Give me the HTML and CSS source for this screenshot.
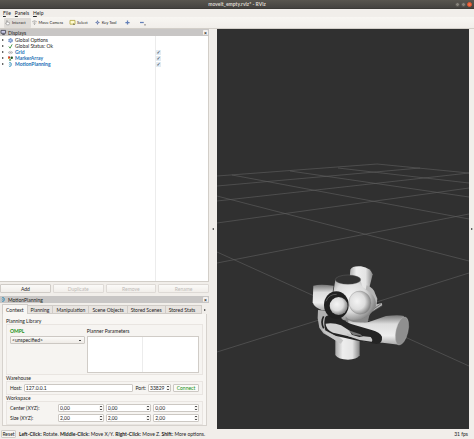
FILE: index.html
```html
<!DOCTYPE html>
<html lang="en">
<head>
    <meta charset="UTF-8">
    <meta name="viewport" content="width=device-width, initial-scale=1.0">
    <title>moveit_empty.rviz* - RViz</title>
    <link rel="stylesheet" href="styles.css">
</head>
<body>
    <!-- Window title bar -->
    <header class="titlebar">
        <h1>moveit_empty.rviz* - RViz</h1>
        <div class="window-buttons">
            <button type="button" aria-label="Minimize"></button>
            <button type="button" aria-label="Maximize"></button>
            <button type="button" class="close" aria-label="Close"></button>
        </div>
    </header>

    <!-- Menu bar -->
    <nav class="menubar">
        <button type="button"><u>F</u>ile</button>
        <button type="button"><u>P</u>anels</button>
        <button type="button"><u>H</u>elp</button>
    </nav>

    <!-- Tools -->
    <div class="toolbar">
        <button type="button" class="tool active">
            <svg class="icon" viewBox="0 0 12 12"><path d="M4 7V1.500q1-1 1.500 0V5l5 1v3l-1 2.500H4L1 7.500q1-1 3 .8" fill="#fff" stroke="#666" stroke-width="1"/></svg>
            Interact
        </button>
        <button type="button" class="tool">
            <svg class="icon" viewBox="0 0 12 12"><path d="M6 3v8M3 8l3 3 3-3M1 4q5-5 10 0M1 4l3 1M11 4L8 5" fill="none" stroke="#777" stroke-width="1"/></svg>
            Move Camera
        </button>
        <button type="button" class="tool spaced">
            <svg class="icon" viewBox="0 0 12 12"><path d="M0 1h12v9H0z" fill="#fffbd0" stroke="#b5a742" stroke-width="2"/><path d="M8 7l4 5H8z" fill="#665"/></svg>
            Select
        </button>
        <button type="button" class="tool spaced">
            <svg class="icon" viewBox="0 0 12 12"><path d="M6 0l2 4 4 2-4 2-2 4-2-4-4-2 4-2z" fill="#6577a5"/><circle cx="6" cy="6" r="2" fill="#aab9dc"/></svg>
            Key Tool
        </button>
        <button type="button" class="tool plus" aria-label="Add tool">
            <svg class="icon" viewBox="0 0 12 12"><path d="M6 1v10M1 6h10" stroke="#6480b8" stroke-width="3"/></svg>
        </button>
        <button type="button" class="tool" aria-label="Remove tool">
            <svg class="icon" viewBox="0 0 12 12"><path d="M0 6h9" stroke="#6480b8" stroke-width="3"/><path d="M10 11h4l-2 3z" fill="#333"/></svg>
        </button>
    </div>

    <main class="workspace">
        <aside class="sidebar">
            <!-- Displays panel -->
            <section class="displays">
                <div class="panel-title">
                    <svg class="icon" viewBox="0 0 12 12"><path d="M0 1h11v7H0z" fill="#c9cbe8" stroke="#445" stroke-width="2"/><path d="M3 11h6" stroke="#334" stroke-width="2"/></svg>
                    <h2>Displays</h2>
                    <button type="button" class="panel-close" aria-label="Close Displays">×</button>
                </div>
                <ul class="tree">
                    <li>
                        <span class="arrow"></span>
                        <svg class="icon" viewBox="0 0 12 12"><circle cx="6" cy="6" r="4" fill="#b9cbea" stroke="#5a7fbe" stroke-width="3" stroke-dasharray="3 1"/></svg>
                        <span>Global Options</span>
                    </li>
                    <li>
                        <span class="arrow"></span>
                        <svg class="icon" viewBox="0 0 12 12"><path d="M2 6l3 4 5-9" fill="none" stroke="#2b8a2b" stroke-width="2"/></svg>
                        <span>Global Status: Ok</span>
                    </li>
                    <li class="display">
                        <span class="arrow"></span>
                        <svg class="icon" viewBox="0 0 12 12"><path d="M0 6l6-3 6 3-6 3zM3 4l6 4M9 4L3 8" fill="none" stroke="#888" stroke-width="1"/></svg>
                        <label for="grid">Grid</label>
                        <input type="checkbox" id="grid" checked>
                    </li>
                    <li class="display">
                        <span class="arrow"></span>
                        <svg class="icon" viewBox="0 0 12 12"><path d="M0 1h5v5H0z" fill="#c33"/><circle cx="9" cy="4" r="3" fill="#252"/><path d="M5 6l3 5H2z" fill="#2a7d2f"/><path d="M0 2l3 5H0z" fill="#dcb620"/></svg>
                        <label for="marker-array">MarkerArray</label>
                        <input type="checkbox" id="marker-array" checked>
                    </li>
                    <li class="display">
                        <span class="arrow"></span>
                        <svg class="icon" viewBox="0 0 12 12"><path d="M3 1q6 0 5 5 0 5-5 5M3 4q3 2 0 4" fill="none" stroke="#2787b5" stroke-width="2"/></svg>
                        <label for="motion-planning">MotionPlanning</label>
                        <input type="checkbox" id="motion-planning" checked>
                    </li>
                </ul>
                <div class="display-buttons">
                    <button type="button">Add</button>
                    <button type="button" disabled>Duplicate</button>
                    <button type="button" disabled>Remove</button>
                    <button type="button" disabled>Rename</button>
                </div>
            </section>

            <!-- MotionPlanning panel -->
            <section class="motion">
                <div class="panel-title">
                    <svg class="icon" viewBox="0 0 12 12"><path d="M3 1q6 0 5 5 0 5-5 5M3 4q3 2 0 4" fill="none" stroke="#2787b5" stroke-width="2"/></svg>
                    <h2>MotionPlanning</h2>
                    <button type="button" class="panel-close" aria-label="Close MotionPlanning">×</button>
                </div>
                <div class="tabs">
                    <button type="button" class="tab current">Context</button>
                    <button type="button" class="tab">Planning</button>
                    <button type="button" class="tab">Manipulation</button>
                    <button type="button" class="tab">Scene Objects</button>
                    <button type="button" class="tab">Stored Scenes</button>
                    <button type="button" class="tab last">Stored Stats</button>
                    <button type="button" class="tab-scroll" aria-label="Scroll tabs"><span class="arrow"></span></button>
                </div>
                <form class="tab-page">
                    <h3>Planning Library</h3>
                    <div class="group library">
                        <div class="planner">
                            <label for="planner" class="ompl">OMPL</label>
                            <select id="planner">
                                <option>&lt;unspecified&gt;</option>
                            </select>
                        </div>
                        <div class="parameters">
                            <span>Planner Parameters</span>
                            <div class="parameter-table"></div>
                        </div>
                    </div>

                    <h3>Warehouse</h3>
                    <div class="group warehouse">
                        <label for="host">Host:</label>
                        <input type="text" id="host" value="127.0.0.1">
                        <label for="port">Port:</label>
                        <span class="spin port"><input type="text" id="port" value="33829"><i></i></span>
                        <button type="button" class="connect">Connect</button>
                    </div>

                    <h3>Workspace</h3>
                    <div class="group volume">
                        <label for="center-x">Center (XYZ):</label>
                        <span class="spin"><input type="text" id="center-x" value="0,00"><i></i></span>
                        <span class="spin"><input type="text" aria-label="Center Y" value="0,00"><i></i></span>
                        <span class="spin"><input type="text" aria-label="Center Z" value="0,00"><i></i></span>
                        <label for="size-x">Size (XYZ):</label>
                        <span class="spin"><input type="text" id="size-x" value="2,00"><i></i></span>
                        <span class="spin"><input type="text" aria-label="Size Y" value="2,00"><i></i></span>
                        <span class="spin"><input type="text" aria-label="Size Z" value="2,00"><i></i></span>
                    </div>
                </form>
            </section>
        </aside>

        <div class="splitter"><span class="arrow back"></span></div>

        <!-- 3D view -->
        <div class="view">
            <svg viewBox="217 29 252 400" preserveAspectRatio="xMidYMid slice">
                <defs>
                    <linearGradient id="tube">
                        <stop offset="0" stop-color="#aaa"/>
                        <stop offset=".3" stop-color="#eee"/>
                        <stop offset=".7" stop-color="#e4e4e4"/>
                        <stop offset="1" stop-color="#858585"/>
                    </linearGradient>
                    <linearGradient id="arm" x1="0" y1="0" x2="0" y2="1">
                        <stop offset="0" stop-color="#777"/>
                        <stop offset=".3" stop-color="#ddd"/>
                        <stop offset=".7" stop-color="#eee"/>
                        <stop offset="1" stop-color="#aaa"/>
                    </linearGradient>
                    <radialGradient id="ball" cx=".4" cy=".4" r=".6">
                        <stop offset="0" stop-color="#f4f4f4"/>
                        <stop offset=".6" stop-color="#ddd"/>
                        <stop offset="1" stop-color="#888"/>
                    </radialGradient>
                </defs>
                <!-- ground grid -->
                <path class="ground" d="M377 164L469 173M338 168L469 183M290 171L469 197M232 175L469 219M217 196L469 261M217 252L469 366
                    M217 176L377 164M217 186L420 168M217 201L469 173M217 223L469 188M217 263L469 214M217 352L469 273"/>
                <!-- robot arm -->
                <g transform="translate(300 255) scale(.3333)">
                    <path d="M151 44q5-12 32-10 31 6 35 24l-11 45-31 5-28-25z" fill="url(#tube)"/>
                    <path d="M200 91q22 8 26 26l6 14-2 17 15-4 2 7-35 22-32 5z" fill="#b5b5b5"/>
                    <path d="M208 175l38-22M211 169l32-23" stroke="#555" stroke-width="2"/>
                    <path d="M40 92q20-5 61 0l-12 73-23 1q-24-9-28-24z" fill="url(#arm)"/>
                    <path d="M54 165l25 2 12 25 37 55-6 18-52-30-12-17-5-28z" fill="#b2b2b2"/>
                    <path d="M106 244h73v57q-9 13-35 13-29 0-38-14z" fill="url(#tube)"/>
                    <path d="M106 75q37 14 75 0l7 21 24 18q18 16 16 40l-20 27-37 20-45-6-26-83z" fill="url(#ball)"/>
                    <ellipse cx="144" cy="74" rx="38" ry="14" fill="#333" stroke="#777" stroke-width="1"/>
                    <path d="M137 184q8 17 47 8l25-14-6 24-52 9-14-12z" fill="#888"/>
                    <ellipse cx="180" cy="143" rx="33" ry="35" fill="url(#ball)" stroke="#888" stroke-width="1" transform="rotate(-20 180 143)"/>
                    <path d="M145 195q17 11 62 6l51-18q39-5 54 0l-15 86-49-6-55-2-48-39z" fill="url(#arm)"/>
                    <ellipse cx="306" cy="228" rx="18" ry="43" fill="#8f8f8f" stroke="#bbb" stroke-width="1" transform="rotate(13 306 228)"/>
                    <path d="M74 194q0-13 16-14 20 0 33 10 17 15 43 21l49 14q25 6 31 20 2 21-16 22l-57-10-67-15-30-16q-5-20-2-32z" fill="#242424"/>
                    <path d="M77 206q24-4 46 5l26 16 10 20-60-14q-22-10-22-27z" fill="#d4d4d4"/>
                    <path d="M140 235l38 11 12-2 22 2q8 9 3 14l-36-5-36-12z" fill="#c8c8c8"/>
                    <path d="M145 226l36 12 6 5-28-4z" fill="#777"/>
                    <path d="M66 217l9 11 43 20 12 8-8 10-44-29q-12-9-12-20z" fill="#c6c6c6"/>
                    <path d="M71 184q-10 17 0 36" fill="none" stroke="#222" stroke-width="5"/>
                    <ellipse cx="109" cy="150" rx="37" ry="41" fill="#202020"/>
                    <path d="M78 139q9-22 32-21" fill="none" stroke="#555" stroke-width="3"/>
                    <circle cx="116" cy="153" r="27" fill="url(#ball)"/>
                </g>
            </svg>
        </div>

        <div class="splitter"><span class="arrow"></span></div>
    </main>

    <footer class="statusbar">
        <button type="button">Reset</button>
        <p><b>Left-Click:</b> Rotate. <b>Middle-Click:</b> Move X/Y. <b>Right-Click:</b> Move Z. <b>Shift:</b> More options.</p>
        <span class="fps">31 fps</span>
    </footer>
</body>
</html>
```

FILE: styles.css
```css
* {
    box-sizing: border-box;
}

body, h1, h2, h3, p, ul {
    margin: 0;
    padding: 0;
}

body {
    display: flex;
    flex-direction: column;
    height: 100vh;
    overflow: hidden;
    background-color: #f1eeea;
    color: #222;
    font-family: Lato, "Open Sans", sans-serif;
    font-size: 5px;
    line-height: 6px;
    white-space: nowrap;
}

button, input, select {
    margin: 0;
    padding: 0;
    border: none;
    background: none;
    color: inherit;
    font: inherit;
}

.icon {
    width: 5px;
    height: 5px;
    flex: none;
    overflow: visible;
}

/* Small black triangle used in the tree, tabs and splitters */
.arrow {
    border-left: 2px solid #333;
    border-top: 1px solid transparent;
    border-bottom: 1px solid transparent;
}

.arrow.back {
    transform: rotate(180deg);
}

/* Title bar */
.titlebar {
    display: grid;
    grid-template-columns: 1fr auto 1fr;
    align-items: center;
    height: 9px;
    padding: 0 2px;
    background: linear-gradient(#59564f, #454340);
    border-bottom: 1px solid #3c3b37;
    color: #dfdbd2;
}

.titlebar h1 {
    grid-column: 2;
    font-size: 5px;
    font-weight: bold;
}

.window-buttons {
    display: flex;
    justify-content: flex-end;
    gap: 1px;
}

.window-buttons button {
    width: 5px;
    height: 5px;
    border: 1px solid #55524c;
    border-radius: 50%;
    background-color: #85827a;
}

.window-buttons .close {
    background-color: #f46b45;
    border-color: #d9532f;
}

/* Menu and tools */
.menubar {
    display: flex;
    gap: 4px;
    height: 8px;
    padding: 0 3px;
    background-color: #f1eeea;
}

.toolbar {
    display: flex;
    align-items: center;
    height: 12px;
    padding: 0 4px;
    background: linear-gradient(#f8f6f2, #f1eeea);
    border-bottom: 1px solid #d2cec8;
    font-size: 4px;
}

.tool {
    display: flex;
    align-items: center;
    gap: 2px;
    height: 10px;
    padding: 0 1px;
}

.tool.active {
    padding: 0 5px 0 1px;
    background-color: #dedbd7;
    border-radius: 1px;
}

.tool.spaced {
    margin-left: 5px;
}

.tool.plus {
    margin: 0 8px 0 6px;
}

/* Main area */
.workspace {
    display: grid;
    grid-template-columns: 209px 8px 1fr 5px;
    flex: 1;
    min-height: 0;
}

.sidebar {
    display: flex;
    flex-direction: column;
    gap: 3px;
    min-height: 0;
    padding-bottom: 3px;
}

.displays {
    display: flex;
    flex-direction: column;
    flex: 1;
    min-height: 0;
}

.panel-title {
    display: flex;
    align-items: center;
    gap: 2px;
    height: 7px;
    padding: 0 1px;
    background-color: #c8c6c5;
}

.panel-title h2 {
    flex: 1;
    font-size: 5px;
    font-weight: normal;
}

.panel-close {
    width: 5px;
    height: 5px;
    background-color: #f4f2f0;
    border-radius: 1px;
    font-weight: bold;
    line-height: 4px;
}

.tree {
    flex: 1;
    padding-top: 1px;
    background: linear-gradient(#ececec, #ececec) 155px 0 / 1px 100% no-repeat #fff;
    border-right: 1px solid #d2cec8;
    border-bottom: 1px solid #d2cec8;
    list-style: none;
}

.tree li {
    display: grid;
    grid-template-columns: 2px 5px 141px 5px;
    column-gap: 2px;
    align-items: center;
    justify-content: start;
    height: 6px;
    padding-left: 2px;
}

.tree li > .icon {
    margin-left: 2px;
}

.tree li > :nth-child(3) {
    padding-left: 2px;
}

.display {
    color: #1c6fb5;
    font-weight: bold;
}

.tree input {
    appearance: none;
    width: 5px;
    height: 5px;
    background-color: #e3ecf3;
    color: #234;
    line-height: 5px;
    text-align: center;
}

.tree input:checked::before {
    content: "✓";
    display: block;
    font-family: "DejaVu Sans", sans-serif;
}

.display-buttons {
    display: grid;
    grid-template-columns: repeat(4, 1fr);
    gap: 2px;
    padding-top: 2px;
}

.display-buttons button {
    height: 9px;
    border: 1px solid #d0ccc7;
    border-radius: 1px;
    background: linear-gradient(#fbfaf8, #f1eeea);
}

.display-buttons button:disabled {
    color: #bebbb7;
    border-color: #dedad6;
}

/* Tabs */
.tabs {
    display: flex;
    align-items: flex-end;
    height: 11px;
    padding: 0 2px;
}

.tab {
    height: 9px;
    padding: 0 3px;
    border: 1px solid #d0ccc7;
    border-left: none;
    background-color: #e8e4e0;
}

.tab.current {
    height: 10px;
    border-left: 1px solid #d0ccc7;
    border-bottom: none;
    background-color: #f8f6f3;
}

.tab.last {
    flex: 1;
    padding-right: 0;
    text-align: left;
}

.tab-scroll {
    display: flex;
    align-items: center;
    justify-content: center;
    width: 5px;
    height: 9px;
}

.tab-page {
    margin: 0 2px;
    padding: 4px 3px 0;
    border: 1px solid #d6d2cd;
    border-top: none;
    background-color: #f8f6f3;
}

.tab-page h3 {
    font-size: 5px;
    font-weight: normal;
}

.group {
    padding: 2px 3px;
    border: 1px solid #e9e5e1;
    background-color: #f6f4f1;
}

.library {
    display: grid;
    grid-template-columns: 2fr 3fr;
    gap: 2px;
    padding-top: 3px;
    padding-bottom: 1px;
}

.planner, .parameters {
    display: flex;
    flex-direction: column;
    gap: 2px;
}

.ompl {
    color: #159015;
    font-weight: bold;
}

.library select {
    appearance: none;
    height: 8px;
    padding: 0 1px;
    border: 1px solid #ccc8c3;
    border-radius: 1px;
    background: linear-gradient(#444, #444) right 3px center / 2px 1px no-repeat, linear-gradient(#fbfaf8, #efebe7);
}

.parameter-table {
    height: 37px;
    border: 1px solid #d0ccc7;
    background: linear-gradient(#ececec, #ececec) center / 1px 100% no-repeat #fff;
}

.warehouse {
    display: flex;
    align-items: center;
    gap: 2px;
}

input[type="text"] {
    min-width: 0;
    height: 8px;
    padding: 0 1px;
    border: 1px solid #ccc8c3;
    border-radius: 1px;
    background-color: #fff;
}

#host {
    flex: 1;
}

.spin {
    display: flex;
    border: 1px solid #ccc8c3;
    border-radius: 1px;
    background-color: #fff;
}

.spin input[type="text"] {
    flex: 1;
    width: 0;
    height: 6px;
    border: none;
}

/* up and down marks of a spin box */
.spin i {
    width: 4px;
    margin: 1px 0;
    background:
        linear-gradient(#555, #555) center top / 2px 1px no-repeat,
        linear-gradient(#555, #555) center bottom / 2px 1px no-repeat,
        #f4f2ef;
}

.spin.port {
    width: 23px;
}

.connect {
    width: 26px;
    height: 8px;
    border: 1px solid #ccc8c3;
    border-radius: 1px;
    background-color: #fbfaf8;
    color: #159015;
}

.volume {
    display: grid;
    grid-template-columns: 46px repeat(3, 1fr);
    gap: 2px;
    align-items: center;
}

/* 3D view */
.splitter {
    display: flex;
    align-items: center;
    justify-content: center;
}

.view {
    min-height: 0;
    background-color: #303030;
}

.view svg {
    display: block;
    width: 100%;
    height: 100%;
}

.ground {
    fill: none;
    stroke: #606060;
    stroke-width: 1;
    opacity: 0.6;
}

/* Status bar */
.statusbar {
    display: flex;
    align-items: center;
    gap: 3px;
    height: 10px;
    padding: 0 6px 0 1px;
}

.statusbar button {
    width: 15px;
    height: 8px;
    border: 1px solid #d0ccc7;
    border-radius: 1px;
    background-color: #f8f6f3;
}

.fps {
    margin-left: auto;
}
```
